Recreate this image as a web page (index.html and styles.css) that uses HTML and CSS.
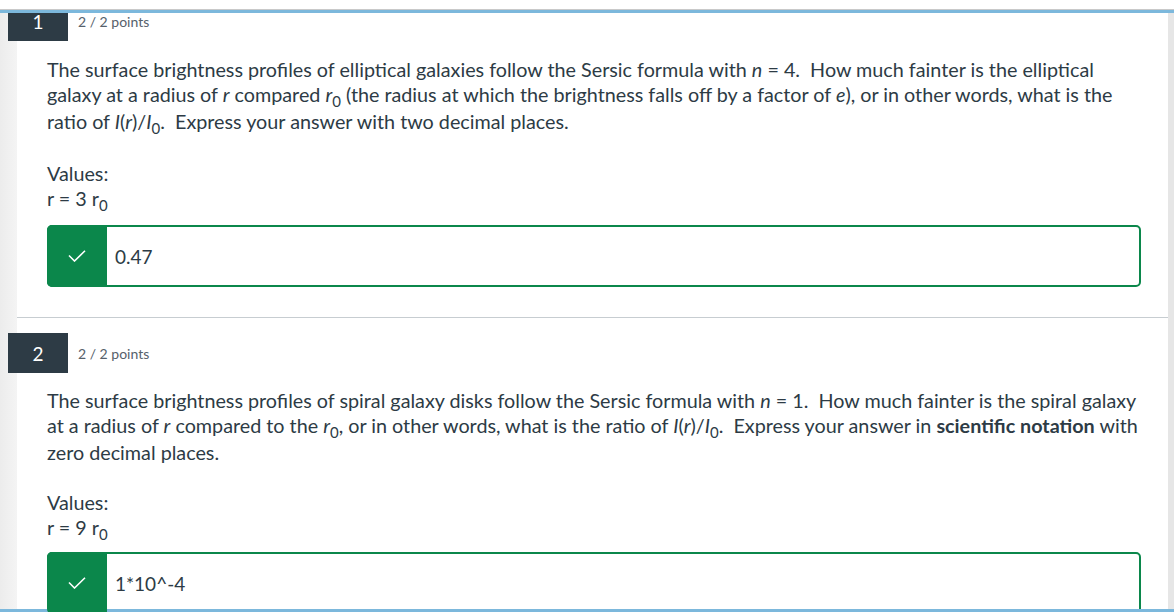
FILE: index.html
```html
<!DOCTYPE html>
<html>
<head>
<meta charset="utf-8">
<link rel="stylesheet" href="styles.css">
</head>
<body>
<div class="topbar"></div>
<div class="bottombar"></div>
<main class="main">
  <section class="question q1">
    <div class="qhead">
      <div class="badge">1</div>
      <div class="points">2 / 2 points</div>
    </div>
    <div class="qbody">
      <p class="text">The surface brightness profiles of elliptical galaxies follow the Sersic formula with <i>n</i> = 4.&nbsp; How much fainter is the elliptical galaxy at a radius of <i>r</i> compared <i>r</i><sub>0</sub> (the radius at which the brightness falls off by a factor of <i>e</i>), or in other words, what is the ratio of <i>I</i>(<i>r</i>)/<i>I</i><sub>0</sub>.&nbsp; Express your answer with two decimal places.</p>
      <p class="values">Values:<br>r = 3 r<sub>0</sub></p>
      <div class="answer">
        <div class="check"><svg width="18" height="12" viewBox="0 0 18 12"><polyline points="1,5.5 6.5,11 17,0.8" fill="none" stroke="#fff" stroke-width="1.6"/></svg></div>
        <div class="value">0.47</div>
      </div>
    </div>
  </section>
  <hr class="sep">
  <section class="question q2">
    <div class="qhead">
      <div class="badge">2</div>
      <div class="points">2 / 2 points</div>
    </div>
    <div class="qbody">
      <p class="text">The surface brightness profiles of spiral galaxy disks follow the Sersic formula with <i>n</i> = 1.&nbsp; How much fainter is the spiral galaxy at a radius of <i>r</i> compared to the <i>r</i><sub>0</sub>, or in other words, what is the ratio of <i>I</i>(<i>r</i>)/<i>I</i><sub>0</sub>.&nbsp; Express your answer in <b>scientific notation</b> with zero decimal places.</p>
      <p class="values">Values:<br>r = 9 r<sub>0</sub></p>
      <div class="answer">
        <div class="check"><svg width="18" height="12" viewBox="0 0 18 12"><polyline points="1,5.5 6.5,11 17,0.8" fill="none" stroke="#fff" stroke-width="1.6"/></svg></div>
        <div class="value">1*10^-4</div>
      </div>
    </div>
  </section>
</main>
</body>
</html>
```
FILE: styles.css
```css
html, body {
  margin: 0;
  padding: 0;
  height: 100%;
  overflow: hidden;
}
body {
  font-family: Lato, "Open Sans", sans-serif;
  color: #2d3b45;
  background: linear-gradient(to right, #ececec 0, #f4f4f4 17px, #fff 17px, #fff 1168px, #e6e6e6 1168px);
}
.topbar {
  position: fixed;
  top: 0;
  left: 0;
  right: 0;
  height: 9px;
  background: #fff;
  border-bottom: 1px solid #c9c9c9;
  box-shadow: 0 3px 0 #7cb8dc;
  z-index: 5;
}
.bottombar {
  position: fixed;
  left: 0;
  right: 0;
  top: 609px;
  height: 3px;
  background: #7cb8dc;
  z-index: 1;
}
.main {
  margin: 0 6px 0 17px;
  padding-top: 1px;
}
.qhead {
  display: flex;
  align-items: center;
  height: 40px;
}
.badge {
  margin-left: -9px;
  width: 60px;
  height: 40px;
  background: #2d3b45;
  color: #fff;
  font-size: 19px;
  display: flex;
  align-items: center;
  justify-content: center;
}
.points {
  margin-left: 10px;
  font-size: 14px;
  color: #56616b;
}
.qbody {
  padding: 16px 27px 0 30px;
}
.text, .values {
  margin: 0;
  font-size: 19.75px;
  line-height: 25px;
}
.values {
  margin-top: 25px;
}
sub {
  font-size: 15px;
  line-height: 15px;
  vertical-align: -5px;
}
.answer {
  margin-top: 12px;
  height: 62px;
  box-sizing: border-box;
  border: 2px solid #0b874b;
  border-radius: 5px;
  display: flex;
  align-items: stretch;
  background: #fff;
  position: relative;
}
.check {
  width: 60px;
  margin: -2px 0 -2px -2px;
  background: #0b874b;
  border-radius: 5px 0 0 5px;
  display: flex;
  align-items: center;
  justify-content: center;
  position: relative;
  z-index: 2;
}
.value {
  display: flex;
  align-items: center;
  padding-left: 8px;
  font-size: 19px;
}
.sep {
  margin: 30px 0 15px;
  border: 0;
  border-top: 1px solid #c7cdd1;
  height: 0;
}
.q2 .qbody {
  padding-top: 15px;
}
.q2 .answer {
  margin-top: 10px;
}
```
